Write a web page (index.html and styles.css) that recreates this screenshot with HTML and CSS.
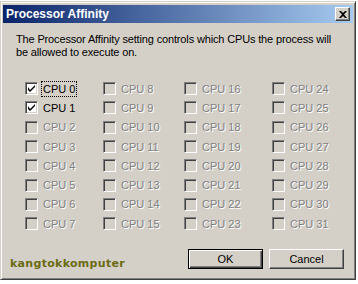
FILE: index.html
```html
<!DOCTYPE html>
<html>
<head>
<meta charset="utf-8">
<link rel="stylesheet" href="styles.css">
</head>
<body>
<div class="window">
  <div class="titlebar">
    <span class="title">Processor Affinity</span>
    <span class="close"><svg width="8" height="7" viewBox="0 0 8 7"><path d="M0 0h2l2 2 2-2h2L5 3.5 8 7H6L4 5 2 7H0l3-3.5z" fill="#000"/></svg></span>
  </div>
  <div class="content">
    <p class="desc">The Processor Affinity setting controls which CPUs the process will be allowed to execute on.</p>
    <div class="grid" id="grid"></div>
    <div class="footer">
      <span class="brand">kangtokkomputer</span>
      <div class="buttons">
        <button class="btn default">OK</button>
        <button class="btn">Cancel</button>
      </div>
    </div>
  </div>
</div>
<script>
  var g = document.getElementById('grid');
  for (var r = 0; r < 8; r++) {
    for (var c = 0; c < 4; c++) {
      var n = c * 8 + r;
      var on = n < 2;
      var d = document.createElement('div');
      d.className = 'item' + (on ? ' on' : ' off');
      d.innerHTML = '<span class="box">' + (on ? '<svg width="7" height="7" viewBox="0 0 7 7"><path d="M0 2v3l2 2 5-5V-0L2 5z" fill="#000"/></svg>' : '') + '</span><span class="lbl' + (n === 0 ? ' focus' : '') + '">CPU ' + n + '</span>';
      g.appendChild(d);
    }
  }
</script>
</body>
</html>
```
FILE: styles.css
```css
html, body {
  margin: 0;
  padding: 0;
  background: #ffffff;
}
body {
  width: 358px;
  height: 284px;
  overflow: hidden;
  font-family: "Liberation Sans", Arial, sans-serif;
  font-size: 11px;
}
.window {
  margin-top: 1px;
  width: 356px;
  height: 279px;
  box-sizing: border-box;
  background: #d4d0c8;
  border: 1px solid;
  border-color: #d4d0c8 #404040 #404040 #d4d0c8;
  box-shadow: inset 1px 1px 0 #ffffff, inset -1px -1px 0 #808080;
  padding: 2px;
  display: flex;
  flex-direction: column;
}
.titlebar {
  height: 18px;
  margin-top: 1px;
  background: linear-gradient(to right, #0a246a, #a6caf0);
  display: flex;
  align-items: center;
  justify-content: space-between;
  padding: 0 3px 0 3px;
}
.title {
  color: #ffffff;
  font-weight: bold;
  font-family: "Liberation Sans", Arial, sans-serif;
  font-size: 12px;
}
.close {
  width: 15px;
  height: 14px;
  box-sizing: border-box;
  background: #d4d0c8;
  border: 1px solid;
  border-color: #ffffff #404040 #404040 #ffffff;
  box-shadow: inset -1px -1px 0 #808080;
  display: flex;
  align-items: center;
  justify-content: center;
}
.content {
  flex: 1;
  display: flex;
  flex-direction: column;
  padding: 10px 9px 0 7px;
}
.desc {
  margin: 0 0 0 6px;
  line-height: 13px;
  color: #000;
  width: 322px;
  letter-spacing: -0.15px;
}
.grid {
  margin-top: 20px;
  margin-left: 15px;
  display: grid;
  grid-template-columns: 78px 81px 88px 60px;
  grid-auto-rows: 19.3px;
}
.item {
  display: flex;
  align-items: center;
}
.box {
  width: 13px;
  height: 13px;
  box-sizing: border-box;
  border: 1px solid;
  border-color: #808080 #ffffff #ffffff #808080;
  box-shadow: inset 1px 1px 0 #404040, inset -1px -1px 0 #d4d0c8;
  background: #ffffff;
  display: flex;
  align-items: center;
  justify-content: center;
  flex: none;
}
.off .box {
  background: #d4d0c8;
}
.lbl {
  margin-left: 3px;
  padding: 1px 1px;
  border: 1px solid transparent;
  line-height: 12px;
  color: #000;
}
.off .lbl {
  color: #808080;
  text-shadow: 1px 1px 0 #ffffff;
}
.lbl.focus {
  border: 1px dotted #000;
}
.footer {
  margin-top: 15px;
  display: flex;
  justify-content: space-between;
  align-items: center;
}
.brand {
  font-family: "DejaVu Sans", Verdana, sans-serif;
  font-weight: bold;
  font-size: 11px;
  letter-spacing: 0.3px;
  color: #6b6b12;
  margin-top: 9px;
}
.buttons {
  display: flex;
  gap: 6px;
}
.btn {
  width: 75px;
  height: 20px;
  box-sizing: border-box;
  margin: 0;
  padding: 0;
  font-family: "Liberation Sans", Arial, sans-serif;
  font-size: 11px;
  color: #000;
  background: #d4d0c8;
  border: 1px solid;
  border-color: #ffffff #404040 #404040 #ffffff;
  box-shadow: inset -1px -1px 0 #808080;
}
.btn.default {
  border: 1px solid #000;
  box-shadow: inset 1px 1px 0 #ffffff, inset -1px -1px 0 #404040, inset -2px -2px 0 #808080;
}
```
